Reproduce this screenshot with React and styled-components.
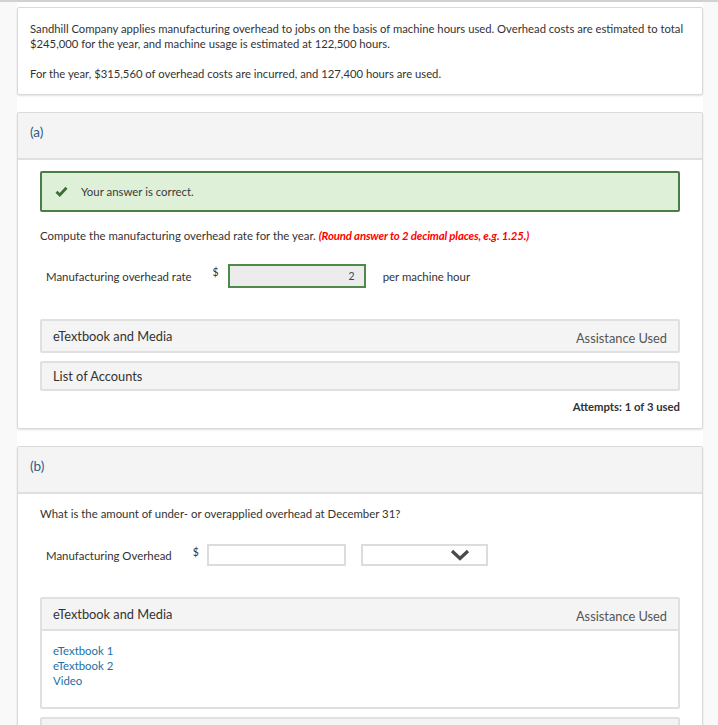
import React from 'react';
import styled, { createGlobalStyle } from 'styled-components';

const GlobalStyle = createGlobalStyle`
    body {
        margin: 0;
        background: #f9f9f9;
        font-family: Lato, "Open Sans", sans-serif;
        color: #333;
    }
`;

const TopLine = styled.div`
    height: 2px;
    background: #d2d2d2;
`;

const Main = styled.main`
    margin: 0 15px 0 17px;
    padding-top: 5px;
    background: #fff;
    display: flex;
    flex-direction: column;
    gap: 17px;
    min-height: 760px;
`;

const Card = styled.section`
    border: 1px solid #dadada;
    border-radius: 2px;
    box-shadow: 0 1px 2px rgba(0, 0, 0, 0.12);
    background: #fff;
`;

const Intro = styled.div`
    padding: 13px 12px 13px;
    font-size: 11.28px;
    line-height: 15px;
    p {
        margin: 0;
    }
    p + p {
        margin-top: 15px;
    }
`;

const PartHeader = styled.div`
    height: 47px;
    padding: 11px 12px 0;
    box-sizing: border-box;
    background: #f4f4f4;
    border-bottom: 2px solid #e0e0e0;
    font-size: 13.5px;
    color: #2b5d87;
`;

const PartBody = styled.div`
    padding: ${p => p.$top ?? 11}px 22px 14px 22px;
`;

const Correct = styled.div`
    display: flex;
    align-items: center;
    gap: 13px;
    height: 41px;
    box-sizing: border-box;
    padding-left: 13px;
    background: #dff0d8;
    border: 2px solid #4a7e45;
    border-radius: 2px;
    font-size: 11.4px;
    color: #3a3a3a;
`;

const Question = styled.p`
    margin: ${p => p.$top ?? 16}px 0 0;
    font-size: 11.4px;
    line-height: 15px;
    color: #333;
`;

const Hint = styled.em`
    font-weight: 700;
    color: #f00;
    letter-spacing: -0.15px;
`;

const AnswerRow = styled.div`
    display: flex;
    align-items: center;
    margin-top: ${p => p.$top ?? 0}px;
    padding-left: 6px;
    font-size: 11.4px;
`;

const Label = styled.span`
    margin-right: 21px;
`;

const Dollar = styled.span`
    align-self: flex-start;
    margin-top: ${p => p.$top ?? 2}px;
    margin-right: ${p => p.$gap ?? 9}px;
    font-size: 10.5px;
`;

const Field = styled.div`
    width: ${p => p.$w}px;
    height: ${p => p.$h}px;
    box-sizing: border-box;
    border: 2px solid ${p => (p.$ok ? '#4f8a4a' : '#dcdcdc')};
    background: ${p => (p.$ok ? '#ececec' : '#fff')};
    display: flex;
    align-items: center;
    justify-content: flex-end;
    padding-right: 9px;
    font-size: 10.5px;
    color: #444;
`;

const Select = styled(Field)`
    margin-left: 15px;
    padding-right: 16px;
`;

const Unit = styled.span`
    margin-left: 17px;
`;

const Panel = styled.div`
    margin-top: ${p => p.$top ?? 8}px;
    border: 2px solid #e0e0e0;
    border-radius: 2px;
    background: #fff;
`;

const PanelHead = styled.div`
    display: flex;
    justify-content: space-between;
    align-items: center;
    height: ${p => p.$h ?? 30}px;
    box-sizing: border-box;
    padding: 0 11px;
    background: #f4f4f4;
    font-size: 12.8px;
    color: #333;
`;

const Used = styled.span`
    margin-top: 3px;
    color: #555;
`;

const Links = styled.div`
    border-top: 2px solid #e0e0e0;
    padding: 12px 11px 19px;
    display: flex;
    flex-direction: column;
    font-size: 11.4px;
    line-height: 15px;
    a {
        color: #1d6fa5;
        text-decoration: none;
    }
`;

const Attempts = styled.div`
    margin-top: 8px;
    text-align: right;
    font-size: 11.3px;
    line-height: 15px;
    font-weight: 700;
    color: #333;
`;

const Check = () => (
    <svg width="13" height="11" viewBox="0 0 13 11">
        <path d="M1.5 5.8 L4.8 9 L11.5 1.8" fill="none" stroke="#3b6e35" strokeWidth="2.8" />
    </svg>
);

const Chevron = () => (
    <svg width="20" height="12" viewBox="0 0 20 12">
        <path d="M2 2 L10 9.5 L18 2" fill="none" stroke="#4a4a4a" strokeWidth="3.2" />
    </svg>
);

export default function App() {
    return (
        <>
            <GlobalStyle />
            <TopLine />
            <Main>
                <Card>
                    <Intro>
                        <p>
                            Sandhill Company applies manufacturing overhead to jobs on the basis of machine hours used. Overhead costs are estimated to total $245,000 for the year, and machine usage is estimated at 122,500 hours.
                        </p>
                        <p>For the year, $315,560 of overhead costs are incurred, and 127,400 hours are used.</p>
                    </Intro>
                </Card>

                <Card>
                    <PartHeader>(a)</PartHeader>
                    <PartBody>
                        <Correct>
                            <Check />
                            Your answer is correct.
                        </Correct>
                        <Question>
                            Compute the manufacturing overhead rate for the year. <Hint>(Round answer to 2 decimal places, e.g. 1.25.)</Hint>
                        </Question>
                        <AnswerRow $top={21}>
                            <Label>Manufacturing overhead rate</Label>
                            <Dollar>$</Dollar>
                            <Field $ok $w={138} $h={24}>2</Field>
                            <Unit>per machine hour</Unit>
                        </AnswerRow>
                        <Panel $top={31}>
                            <PanelHead $h={30}>
                                eTextbook and Media
                                <Used>Assistance Used</Used>
                            </PanelHead>
                        </Panel>
                        <Panel>
                            <PanelHead $h={26}>List of Accounts</PanelHead>
                        </Panel>
                        <Attempts>Attempts: 1 of 3 used</Attempts>
                    </PartBody>
                </Card>

                <Card>
                    <PartHeader>(b)</PartHeader>
                    <PartBody $top={12}>
                        <Question $top={0}>What is the amount of under- or overapplied overhead at December 31?</Question>
                        <AnswerRow $top={23}>
                            <Label>Manufacturing Overhead</Label>
                            <Dollar $top={2} $gap={8}>$</Dollar>
                            <Field $w={139} $h={22} />
                            <Select $w={127} $h={22}>
                                <Chevron />
                            </Select>
                        </AnswerRow>
                        <Panel $top={31}>
                            <PanelHead $h={30}>
                                eTextbook and Media
                                <Used>Assistance Used</Used>
                            </PanelHead>
                            <Links>
                                <a href="#e1">eTextbook 1</a>
                                <a href="#e2">eTextbook 2</a>
                                <a href="#v">Video</a>
                            </Links>
                        </Panel>
                        <Panel>
                            <PanelHead $h={30} />
                        </Panel>
                    </PartBody>
                </Card>
            </Main>
        </>
    );
}
